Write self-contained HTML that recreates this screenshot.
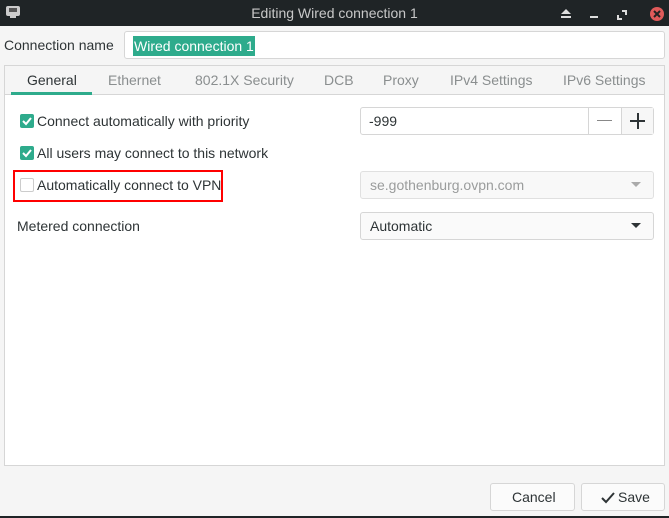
<html><head><style>
body{margin:0;width:669px;height:518px;background:#f5f5f5;font-family:"Liberation Sans",sans-serif;font-size:14px;color:#2e3436;position:relative;overflow:hidden}
div,span{position:absolute;box-sizing:border-box}
.t{white-space:nowrap;margin-top:1px}
.cb{width:14px;height:14px;border-radius:2px;background:#2eab8c}
.box{background:#fff;border:1px solid #d6d6d6;border-radius:3px}
</style></head><body>
<div style="left:0;top:0;width:669px;height:26px;background:#1f2426"></div>
<svg style="position:absolute;left:5px;top:5px" width="16" height="14"><rect x="1" y="1" width="14" height="10" rx="2" fill="#ccc"/><rect x="5" y="11" width="6" height="2" fill="#ccc"/><rect x="4" y="3" width="8" height="4" fill="#555"/></svg>
<div class="t" style="left:0;width:669px;top:4px;text-align:center;color:#c8c8c8;font-size:14px">Editing Wired connection 1</div>
<svg style="position:absolute;left:560px;top:7px" width="110" height="14"><path d="M1 7 L6 2 L11 7Z M1 9h10v2H1z" fill="#ddd"/><rect x="30" y="9" width="8" height="2" fill="#ddd"/><path d="M62 4h4v4M58 12v-4h0 M58 8v4h4" stroke="#ddd" stroke-width="2" fill="none"/><circle cx="97" cy="7" r="7" fill="#e05a5a"/><path d="M94 4l6 6M100 4l-6 6" stroke="#222" stroke-width="2"/></svg>
<div class="t" style="left:4px;top:36px">Connection name</div>
<div class="box" style="left:124px;top:31px;width:541px;height:28px"></div>
<div class="t" style="left:133px;top:35px;background:#2eab8c;color:#fff;padding:1px 1px;line-height:18px">Wired connection 1</div>
<div style="left:4px;top:65px;width:661px;height:401px;border:1px solid #d6d6d6;background:#fff"></div>
<div style="left:5px;top:66px;width:659px;height:29px;background:#f5f5f5;border-bottom:1px solid #d6d6d6"></div>
<div style="left:11px;top:92px;width:81px;height:3px;background:#2eab8c"></div>
<div class="t" style="left:27px;top:71px;color:#2e3436">General</div>
<div class="t" style="left:108px;top:71px;color:#8a8e8f">Ethernet</div>
<div class="t" style="left:195px;top:71px;color:#8a8e8f">802.1X Security</div>
<div class="t" style="left:324px;top:71px;color:#8a8e8f">DCB</div>
<div class="t" style="left:383px;top:71px;color:#8a8e8f">Proxy</div>
<div class="t" style="left:450px;top:71px;color:#8a8e8f">IPv4 Settings</div>
<div class="t" style="left:563px;top:71px;color:#8a8e8f">IPv6 Settings</div>
<div class="cb" style="left:20px;top:114px"></div>
<svg style="position:absolute;left:20px;top:114px" width="14" height="14"><path d="M3 7l3 3 5-6" stroke="#fff" stroke-width="2" fill="none"/></svg>
<div class="t" style="left:37px;top:112px">Connect automatically with priority</div>
<div class="box" style="left:360px;top:107px;width:294px;height:28px"></div>
<div style="left:588px;top:108px;width:1px;height:26px;background:#d6d6d6"></div>
<div style="left:621px;top:108px;width:1px;height:26px;background:#d6d6d6"></div>
<div style="left:622px;top:108px;width:31px;height:26px;background:#f7f7f7"></div>
<div style="left:597px;top:120px;width:15px;height:1px;background:#888"></div>
<div style="left:630px;top:120px;width:15px;height:2px;background:#2e3436"></div>
<div style="left:637px;top:113px;width:2px;height:16px;background:#2e3436"></div>
<div class="t" style="left:369px;top:112px">-999</div>
<div class="cb" style="left:20px;top:146px"></div>
<svg style="position:absolute;left:20px;top:146px" width="14" height="14"><path d="M3 7l3 3 5-6" stroke="#fff" stroke-width="2" fill="none"/></svg>
<div class="t" style="left:37px;top:144px">All users may connect to this network</div>
<div style="left:13px;top:170px;width:210px;height:32px;border:2px solid #f00"></div>
<div style="left:20px;top:178px;width:14px;height:14px;border:1px solid #ccc;border-radius:2px;background:#fff"></div>
<div class="t" style="left:37px;top:176px">Automatically connect to VPN</div>
<div style="left:360px;top:171px;width:294px;height:28px;border:1px solid #e0e0e0;border-radius:3px;background:#f8f8f8"></div>
<div class="t" style="left:370px;top:176px;color:#9a9c9c">se.gothenburg.ovpn.com</div>
<svg style="position:absolute;left:631px;top:182px" width="10" height="6"><path d="M0 0h10L5 5z" fill="#aaa"/></svg>
<div class="t" style="left:17px;top:217px">Metered connection</div>
<div class="box" style="left:360px;top:212px;width:294px;height:28px;background:#fafafa"></div>
<div class="t" style="left:370px;top:217px">Automatic</div>
<svg style="position:absolute;left:631px;top:223px" width="10" height="6"><path d="M0 0h10L5 5z" fill="#2e3436"/></svg>
<div class="box" style="left:490px;top:483px;width:85px;height:28px;background:#fbfbfb"></div>
<div class="t" style="left:512px;top:488px">Cancel</div>
<div class="box" style="left:581px;top:483px;width:84px;height:28px;background:#fbfbfb"></div>
<svg style="position:absolute;left:601px;top:492px" width="14" height="12"><path d="M1 6l4 4 8-9" stroke="#2e3436" stroke-width="2" fill="none"/></svg>
<div class="t" style="left:618px;top:488px">Save</div>
<div style="left:0;top:516px;width:669px;height:2px;background:#1f2426"></div>
</body></html>
